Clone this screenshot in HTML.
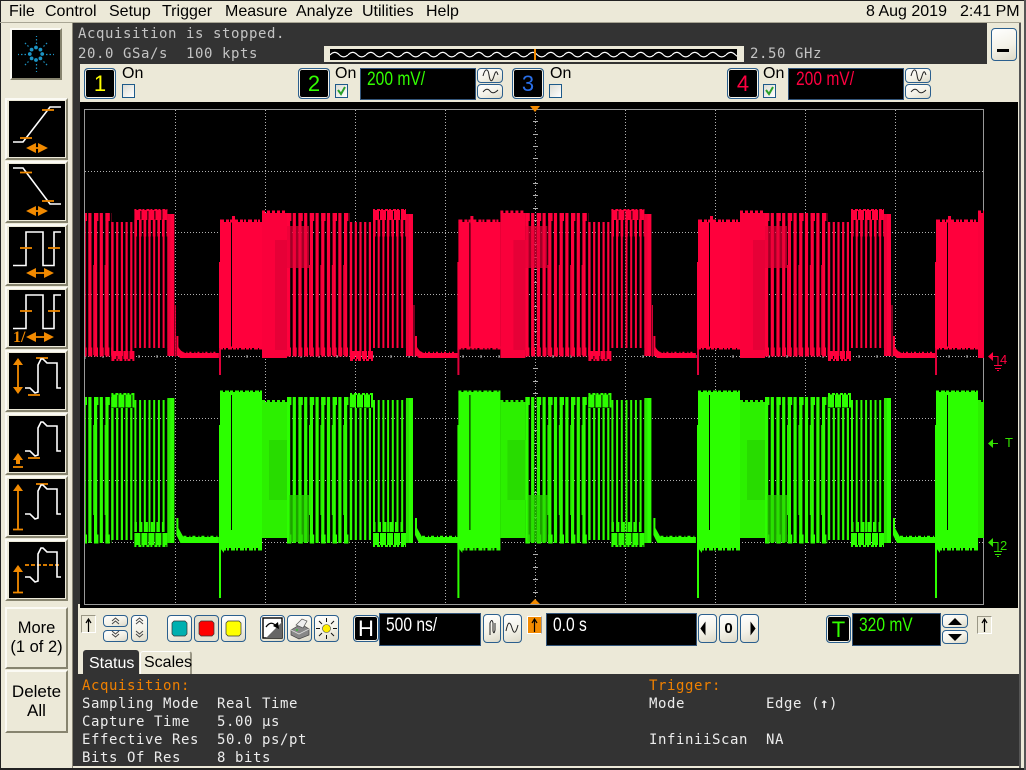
<!DOCTYPE html>
<html><head><meta charset="utf-8"><title>Scope</title>
<style>
html,body{margin:0;padding:0;background:#ece9d8;}
#p{position:relative;width:1026px;height:770px;overflow:hidden;background:#ece9d8;font-family:"Liberation Sans",sans-serif;color:#000;}
#p div{position:absolute;box-sizing:border-box;white-space:pre;}
.d{background:#333;}
.k{background:#000;border:1px solid #33557a;}
.b{background:linear-gradient(160deg,#fff 0%,#f4f2e8 55%,#dcd9c8 100%);border:1.5px solid #2b5f8e;border-radius:4px;}
.r{background:#ece9d8;border:2px solid;border-color:#fbfaf4 #87846f #87846f #fbfaf4;}
.t{font-size:16px;line-height:18px;}
.v{font-size:19px;line-height:18px;transform:scaleX(.82);transform-origin:0 0;}
.m{font-family:"DejaVu Sans Mono","Liberation Mono",monospace;font-size:14px;line-height:18px;letter-spacing:.57px;color:#ececec;}
.n{font-size:22px;line-height:30px;text-align:center;background:#000;border:1.5px solid #2b5f8e;border-radius:4px;box-shadow:0 0 0 1px #f4f2e8 inset;}
.ck{background:linear-gradient(135deg,#dcdcd4,#fff);border:1px solid #1d5a8a;width:13px;height:14px;}
</style></head><body><div id="p">

<div style="left:0;top:0;width:1026px;height:1px;background:#222"></div>
<div style="left:0;top:0;width:1px;height:770px;background:#222"></div>
<div style="left:0;top:768px;width:1026px;height:2px;background:#222"></div>
<div style="left:0;top:22px;width:1021px;height:1px;background:#a8a594"></div>
<div style="left:1024px;top:0;width:2px;height:770px;background:#555"></div>

<div class="t" style="left:9px;top:3px">File</div>
<div class="t" style="left:45px;top:3px">Control</div>
<div class="t" style="left:109px;top:3px">Setup</div>
<div class="t" style="left:162px;top:3px">Trigger</div>
<div class="t" style="left:225px;top:3px">Measure</div>
<div class="t" style="left:296px;top:3px">Analyze</div>
<div class="t" style="left:362px;top:3px">Utilities</div>
<div class="t" style="left:426px;top:3px">Help</div>
<div class="t" style="left:866px;top:3px">8 Aug 2019</div>
<div class="t" style="left:960px;top:3px">2:41 PM</div>

<!-- structure -->
<div style="left:72px;top:23px;width:1px;height:745px;background:#8a8778"></div>
<div class="d" style="left:73px;top:23px;width:914px;height:41px"></div>
<div class="d" style="left:73px;top:64px;width:5px;height:610px"></div>
<div class="d" style="left:78px;top:64px;width:2px;height:540px"></div>
<div style="left:1019px;top:23px;width:2px;height:745px;background:#555"></div>
<div style="left:80px;top:102px;width:938px;height:506px;background:#000"></div>
<div class="d" style="left:73px;top:674px;width:946px;height:92px"></div>

<!-- top text -->
<div class="m" style="left:78px;top:25px;color:#c4c4c4">Acquisition is stopped.</div>
<div class="m" style="left:78px;top:45px;color:#c4c4c4">20.0 GSa/s  100 kpts</div>
<div class="m" style="left:750px;top:45px;color:#c4c4c4">2.50 GHz</div>
<div style="left:324px;top:46px;width:420px;height:16px;background:#ece9d8"></div>
<div class="b" style="left:991px;top:28px;width:26px;height:33px"></div>

<!-- left panel -->
<div class="r" style="left:10px;top:28px;width:52px;height:52px"></div>
<div class="r" style="left:5px;top:98px;width:63px;height:62px"></div>
<div class="r" style="left:5px;top:161px;width:63px;height:62px"></div>
<div class="r" style="left:5px;top:224px;width:63px;height:62px"></div>
<div class="r" style="left:5px;top:287px;width:63px;height:62px"></div>
<div class="r" style="left:5px;top:350px;width:63px;height:62px"></div>
<div class="r" style="left:5px;top:413px;width:63px;height:62px"></div>
<div class="r" style="left:5px;top:476px;width:63px;height:62px"></div>
<div class="r" style="left:5px;top:539px;width:63px;height:62px"></div>
<div class="r" style="left:5px;top:607px;width:63px;height:62px;font-size:16.5px;line-height:19px;text-align:center;padding-top:10px">More
(1 of 2)</div>
<div class="r" style="left:5px;top:670px;width:63px;height:63px;font-size:17px;line-height:19px;text-align:center;padding-top:10px">Delete
All</div>

<!-- channel row -->
<div class="n" style="left:84px;top:68px;width:32px;height:31px;color:#ffff00">1</div>
<div class="t" style="left:122px;top:65px">On</div>
<div class="ck" style="left:122px;top:84px"></div>
<div class="n" style="left:298px;top:68px;width:32px;height:31px;color:#33ff00">2</div>
<div class="t" style="left:335px;top:65px">On</div>
<div class="ck" style="left:335px;top:84px"></div>
<div class="k" style="left:360px;top:68px;width:116px;height:32px"></div>
<div class="t v" style="left:367px;top:71px;color:#33ff00">200 mV/</div>
<div class="b" style="left:477px;top:68px;width:26px;height:15px"></div>
<div class="b" style="left:477px;top:84px;width:26px;height:15px"></div>
<div class="n" style="left:512px;top:68px;width:32px;height:31px;color:#2a6fe8">3</div>
<div class="t" style="left:550px;top:65px">On</div>
<div class="ck" style="left:549px;top:84px"></div>
<div class="n" style="left:727px;top:68px;width:32px;height:31px;color:#ff0040">4</div>
<div class="t" style="left:763px;top:65px">On</div>
<div class="ck" style="left:763px;top:84px"></div>
<div class="k" style="left:788px;top:68px;width:116px;height:32px"></div>
<div class="t v" style="left:796px;top:71px;color:#ff0040">200 mV/</div>
<div class="b" style="left:905px;top:68px;width:26px;height:15px"></div>
<div class="b" style="left:905px;top:84px;width:26px;height:15px"></div>

<!-- bottom controls -->
<div style="left:81px;top:615px;width:15px;height:18px;border:1px solid #9a9786;border-right-color:#fff;border-bottom-color:#fff"></div>
<div class="b" style="left:103px;top:615px;width:25px;height:12px"></div>
<div class="b" style="left:103px;top:630px;width:25px;height:12px"></div>
<div class="b" style="left:131px;top:615px;width:17px;height:27px"></div>
<div class="b" style="left:167px;top:615px;width:25px;height:27px"></div>
<div class="b" style="left:194px;top:615px;width:25px;height:27px;background:#e4e1d2"></div>
<div class="b" style="left:221px;top:615px;width:25px;height:27px"></div>
<div class="b" style="left:260px;top:615px;width:25px;height:27px"></div>
<div class="b" style="left:287px;top:615px;width:25px;height:27px"></div>
<div class="b" style="left:314px;top:615px;width:25px;height:27px"></div>

<div class="n" style="left:353px;top:615px;width:26px;height:27px;color:#fff;line-height:26px">H</div>
<div class="k" style="left:379px;top:613px;width:102px;height:33px"></div>
<div class="t v" style="left:386px;top:617px;color:#fff">500 ns/</div>
<div class="b" style="left:483px;top:614px;width:18px;height:29px"></div>
<div class="b" style="left:503px;top:614px;width:19px;height:29px"></div>
<div style="left:527px;top:616px;width:15px;height:18px;background:#f28a00;border:1px solid #fff;border-right-color:#999"></div>
<div class="k" style="left:546px;top:613px;width:151px;height:33px"></div>
<div class="t v" style="left:553px;top:617px;color:#fff">0.0 s</div>
<div class="b" style="left:698px;top:614px;width:19px;height:29px"></div>
<div class="b" style="left:719px;top:614px;width:19px;height:29px;font-size:15px;font-weight:bold;line-height:27px;text-align:center">0</div>
<div class="b" style="left:740px;top:614px;width:19px;height:29px"></div>
<div class="n" style="left:826px;top:615px;width:25px;height:28px;color:#33ff00;line-height:27px">T</div>
<div class="k" style="left:852px;top:613px;width:89px;height:33px"></div>
<div class="t v" style="left:859px;top:617px;color:#33ff00">320 mV</div>
<div class="b" style="left:942px;top:614px;width:26px;height:14px"></div>
<div class="b" style="left:942px;top:630px;width:26px;height:14px"></div>
<div style="left:977px;top:616px;width:15px;height:18px;border:1px solid #9a9786;border-right-color:#fff;border-bottom-color:#fff"></div>

<!-- tabs -->
<div style="left:83px;top:650px;width:56px;height:24px;background:#333;border-radius:3px 3px 0 0"></div>
<div class="t" style="left:89px;top:655px;color:#fff">Status</div>
<div style="left:140px;top:651px;width:52px;height:23px;border:1px solid #fff;border-right:2px solid #9a9786;border-bottom:none;border-radius:3px 3px 0 0"></div>
<div class="t" style="left:144px;top:654px">Scales</div>

<!-- status text -->
<div class="m" style="left:82px;top:677px;color:#f08000">Acquisition:</div>
<div class="m" style="left:82px;top:695px">Sampling Mode  Real Time</div>
<div class="m" style="left:82px;top:713px">Capture Time   5.00 µs</div>
<div class="m" style="left:82px;top:731px">Effective Res  50.0 ps/pt</div>
<div class="m" style="left:82px;top:749px">Bits Of Res    8 bits</div>
<div class="m" style="left:649px;top:677px;color:#f08000">Trigger:</div>
<div class="m" style="left:649px;top:695px">Mode</div>
<div class="m" style="left:766px;top:695px">Edge (<b>↑</b>)</div>
<div class="m" style="left:649px;top:731px">InfiniiScan</div>
<div class="m" style="left:766px;top:731px">NA</div>

<svg width="1026" height="770" viewBox="0 0 1026 770" style="position:absolute;left:0;top:0">
<defs>
<clipPath id="cp"><rect x="85" y="110" width="899" height="494"/></clipPath>
<pattern id="wv" x="330" y="49" width="18" height="11" patternUnits="userSpaceOnUse">
<path d="M0 6 Q4.5 1 9 5.5 T18 6" fill="none" stroke="#fff" stroke-width="1.2"/>
</pattern>
<marker id="ah" viewBox="0 0 10 10" refX="2" refY="5" markerWidth="5.5" markerHeight="5.5" orient="auto-start-reverse"><path d="M0 0L10 5L0 10z" fill="#f28a00"/></marker>

<g id="rb">
<rect x="1" y="222" width="42" height="126" fill="#ff003c"/>
<rect x="43" y="213" width="25" height="145" fill="#fa003b"/>
<rect x="56" y="240" width="12" height="110" fill="#e60037"/>
<rect x="12" y="222" width="1" height="126" fill="#000"/>
<rect x="13" y="216" width="3" height="8" fill="#ff003c"/>
<path d="M0 262V350H1.600V262z" fill="#ff003c"/>
<rect x="0" y="348" width="2" height="27" fill="#e0003a"/>
<line x1="1" x2="43" y1="348" y2="348" stroke="#ff003c" stroke-width="3" stroke-dasharray="3 1 2 2 4 1"/>
<line x1="1" x2="43" y1="221" y2="221" stroke="#ff003c" stroke-width="3" stroke-dasharray="4 2 3 1 2 2"/>
<line x1="43" x2="68" y1="212" y2="212" stroke="#ff003c" stroke-width="3" stroke-dasharray="3 2"/>
<line x1="68" x2="131" y1="284" y2="284" stroke="#ff003c" stroke-width="142" stroke-dasharray="3.2 2.5"/>
<line x1="68" x2="131" y1="217" y2="217" stroke="#ff003c" stroke-width="8" stroke-dasharray="4.4 7"/>
<line x1="68" x2="131" y1="352" y2="352" stroke="#ff003c" stroke-width="9" stroke-dasharray="4 1.7"/>
<rect x="68" y="226" width="22" height="42" fill="#e80038" opacity=".7"/>
<line x1="90" x2="131" y1="310" y2="310" stroke="#f00038" stroke-width="90" stroke-dasharray="2 9.400"/>
<line x1="131" x2="154" y1="289" y2="289" stroke="#ff003c" stroke-width="134" stroke-dasharray="2.200 2.500"/>
<line x1="131" x2="154" y1="355" y2="355" stroke="#ff003c" stroke-width="8" stroke-dasharray="5 1"/>
<line x1="131" x2="154" y1="360" y2="360" stroke="#ff003c" stroke-width="2" stroke-dasharray="3 2 2 1"/>
<line x1="154" x2="187" y1="215" y2="215" stroke="#ff003c" stroke-width="10" stroke-dasharray="6 1"/>
<line x1="154" x2="187" y1="228" y2="228" stroke="#ff003c" stroke-width="17" stroke-dasharray="2.600 2"/>
<line x1="154" x2="187" y1="210" y2="210" stroke="#ff003c" stroke-width="2" stroke-dasharray="2 2 3 1"/>
<line x1="154" x2="187" y1="284" y2="284" stroke="#ff003c" stroke-width="128" stroke-dasharray="2 2.700"/>
<rect x="187" y="214" width="7" height="142" fill="#ff003c"/>
<rect x="187" y="214" width="3" height="142" fill="#ee003a"/>
<rect x="194.500" y="305" width="1" height="52" fill="#e8003a"/>
<rect x="196" y="336" width="2" height="20" fill="#ff003c"/>
<path d="M197 345Q200 352 205 353H238.500V358H200Q197 356 196 352z" fill="#ff003c"/>
<line x1="201" x2="238" y1="352.500" y2="352.500" stroke="#ff003c" stroke-width="1.500" stroke-dasharray="2 3 1 2"/>
</g>

<g id="gb">
<rect x="1" y="392" width="42" height="156" fill="#2cff00"/>
<rect x="12" y="395" width="1" height="135" fill="#000"/>
<rect x="43" y="402" width="25" height="136" fill="#2cf000"/>
<rect x="50" y="440" width="18" height="60" fill="#28dc00"/>
<path d="M0 425V545H1.600V425z" fill="#2cff00"/>
<rect x="0" y="540" width="2" height="58" fill="#2cff00"/>
<path d="M1 548L5 553V548z" fill="#2cff00"/>
<line x1="1" x2="43" y1="391.500" y2="391.500" stroke="#2cff00" stroke-width="2" stroke-dasharray="3 2 4 1"/>
<line x1="3" x2="43" y1="549" y2="549" stroke="#2cff00" stroke-width="3" stroke-dasharray="4 1 2 2"/>
<line x1="43" x2="68" y1="401" y2="401" stroke="#2cf000" stroke-width="2" stroke-dasharray="3 2"/>
<line x1="68" x2="131" y1="470" y2="470" stroke="#2cff00" stroke-width="146" stroke-dasharray="3.200 2.500"/>
<line x1="68" x2="131" y1="401" y2="401" stroke="#2cff00" stroke-width="8" stroke-dasharray="4.400 7"/>
<line x1="68" x2="131" y1="539" y2="539" stroke="#2cff00" stroke-width="9" stroke-dasharray="4.400 7"/>
<rect x="70" y="495" width="20" height="47" fill="#28d800" opacity=".75"/>
<line x1="90" x2="131" y1="470" y2="470" stroke="#2cf000" stroke-width="90" stroke-dasharray="2 9.400"/>
<line x1="131" x2="154" y1="401" y2="401" stroke="#2cff00" stroke-width="13" stroke-dasharray="6 1"/>
<line x1="131" x2="154" y1="394" y2="394" stroke="#2cff00" stroke-width="2" stroke-dasharray="2 2 3 1"/>
<line x1="131" x2="154" y1="474" y2="474" stroke="#2cff00" stroke-width="132" stroke-dasharray="2.200 2.500"/>
<line x1="154" x2="187" y1="466" y2="466" stroke="#2cff00" stroke-width="132" stroke-dasharray="2 2.700"/>
<line x1="154" x2="187" y1="539" y2="539" stroke="#2cff00" stroke-width="12" stroke-dasharray="6 1"/>
<line x1="154" x2="187" y1="527" y2="527" stroke="#2cff00" stroke-width="10" stroke-dasharray="2.500 3"/>
<line x1="154" x2="187" y1="546" y2="546" stroke="#2cff00" stroke-width="2" stroke-dasharray="2 2 3 1"/>
<rect x="187" y="398" width="7" height="145" fill="#2cff00"/>
<rect x="187" y="398" width="3" height="145" fill="#2ae800"/>
<path d="M196 518H198V528L203 537H238.500V543H200L196 535z" fill="#2cff00"/>
<line x1="203" x2="238" y1="536.500" y2="536.500" stroke="#2cff00" stroke-width="1.500" stroke-dasharray="3 3 1 2"/>
</g>

<path id="pw" d="M25 388H30L35 393L38 392V365L41 359L43 359L47 363H57V388H61" fill="none" stroke="#fff" stroke-width="1.6"/>
</defs>

<!-- logo -->
<rect x="12" y="30" width="48" height="48" fill="#000"/>
<g fill="#1c94c4">
<circle cx="36" cy="47.500" r="1.900"/><circle cx="36" cy="60" r="1.900"/><circle cx="29.800" cy="54" r="1.900"/><circle cx="42.200" cy="54" r="1.900"/>
<circle cx="31.600" cy="49.600" r="1.900"/><circle cx="40.400" cy="49.600" r="1.900"/><circle cx="31.600" cy="58.400" r="1.900"/><circle cx="40.400" cy="58.400" r="1.900"/>
</g>
<g stroke="#1c94c4" stroke-width="1.200" stroke-dasharray="1.500 2" fill="none">
<path d="M36.500 44V36M36.500 64V72M26 54.500H18M46 54.500H54M28.500 46.500L24 42M43.500 46.500L48 42M28.500 61.500L24 66M43.500 61.500L48 66"/>
</g>

<!-- top bar -->
<rect x="330" y="49" width="407" height="11" fill="#000"/>
<rect x="330" y="49" width="407" height="11" fill="url(#wv)"/>
<rect x="534" y="49" width="2" height="11" fill="#f28a00"/>
<rect x="997" y="49" width="12" height="3" fill="#000"/>
<!-- checks -->
<path d="M338 90L341 94L345 87" fill="none" stroke="#2aa02a" stroke-width="2"/>
<path d="M766 90L769 94L773 87" fill="none" stroke="#2aa02a" stroke-width="2"/>
<!-- channel wave icons -->
<g fill="none" stroke="#222" stroke-width="1">
<path d="M483 76C485 68 488 68 489 75S492 83 494 76S497 72 498 75"/>
<path d="M483 92Q487 87 490 91T498 90"/>
<path d="M911 76C913 68 916 68 917 75S920 83 922 76S925 72 926 75"/>
<path d="M911 92Q915 87 918 91T926 90"/>
</g>

<!-- graticule -->
<g stroke="#b0b0b0" stroke-width="1" stroke-dasharray="1 2" fill="none">
<path d="M85 171.500H984M85 232.500H984M85 294.500H984M85 418.500H984M85 480.500H984M85 542.500H984M85 356.500H984"/>
<path d="M175.500 110V604M265.500 110V604M355.500 110V604M445.500 110V604M535.500 110V604M625.500 110V604M715.500 110V604M805.500 110V604M895.500 110V604"/>
</g>
<path d="M85 354V359M103 355V358M121 355V358M139 355V358M157 355V358M193 355V358M211 355V358M229 355V358M247 355V358M283 355V358M301 355V358M319 355V358M337 355V358M373 355V358M391 355V358M409 355V358M427 355V358M463 355V358M481 355V358M499 355V358M517 355V358M553 355V358M571 355V358M589 355V358M607 355V358M643 355V358M661 355V358M679 355V358M697 355V358M733 355V358M751 355V358M769 355V358M787 355V358M823 355V358M841 355V358M859 355V358M877 355V358M913 355V358M931 355V358M949 355V358M967 355V358" stroke="#b0b0b0" stroke-width="1"/>
<path d="M533 121.500H538M533 134.500H538M533 146.500H538M533 158.500H538M533 183.500H538M533 195.500H538M533 208.500H538M533 220.500H538M533 244.500H538M533 257.500H538M533 269.500H538M533 282.500H538M533 306.500H538M533 319.500H538M533 331.500H538M533 344.500H538M533 368.500H538M533 381.500H538M533 393.500H538M533 406.500H538M533 430.500H538M533 443.500H538M533 455.500H538M533 468.500H538M533 492.500H538M533 505.500H538M533 517.500H538M533 530.500H538M533 554.500H538M533 567.500H538M533 579.500H538M533 592.500H538" stroke="#b0b0b0" stroke-width="1"/>
<rect x="84.500" y="109.500" width="899" height="495" fill="none" stroke="#999" stroke-width="1"/>

<!-- waveforms -->
<g clip-path="url(#cp)">
<use href="#rb" x="-19.600"/><use href="#rb" x="219"/><use href="#rb" x="457.400"/><use href="#rb" x="697"/><use href="#rb" x="935"/>
<use href="#gb" x="-19.600"/><use href="#gb" x="219"/><use href="#gb" x="457.400"/><use href="#gb" x="697"/><use href="#gb" x="935"/>
</g>

<path d="M530 106H540L535 112z" fill="#f28a00"/>
<path d="M530 604H540L535 599z" fill="#f28a00"/>

<!-- right markers -->
<g fill="none" stroke="#ff0040" stroke-width="1"><path d="M993 356.500H998V365M994 365.500H1002M995 368.500H1001M997 370.500H999"/></g>
<path d="M988 356.500L993 352V361z" fill="#ff0040"/>
<g fill="none" stroke="#33e000" stroke-width="1"><path d="M993 443.500H998"/><path d="M993 542.500H998V551M994 551.500H1002M995 554.500H1001M997 556.500H999"/></g>
<path d="M988 443.500L993 439V448z" fill="#33e000"/>
<path d="M988 542.500L993 538V547z" fill="#33e000"/>
<text x="1000" y="364" font-family="Liberation Sans,sans-serif" font-size="13" fill="#ff0040">4</text>
<text x="1005" y="447" font-family="Liberation Sans,sans-serif" font-size="13" fill="#33e000">T</text>
<text x="1000" y="550" font-family="Liberation Sans,sans-serif" font-size="13" fill="#33e000">2</text>

<!-- left panel icons -->
<g fill="#000"><rect x="9" y="101" width="56" height="56"/><rect x="9" y="164" width="56" height="56"/><rect x="9" y="227" width="56" height="56"/><rect x="9" y="290" width="56" height="56"/><rect x="9" y="353" width="56" height="56"/><rect x="9" y="416" width="56" height="56"/><rect x="9" y="479" width="56" height="56"/><rect x="9" y="542" width="56" height="56"/></g>
<g fill="none" stroke="#fff" stroke-width="1.6">
<path d="M13 142H23L50 107H61"/>
<path d="M13 168H23L50 204H61"/>
<path d="M13 265.500H26V232H43V265.500H54V232H61"/>
<path d="M13 328.500H26V295H43V328.500H54V295H61"/>
</g>
<g fill="none" stroke="#f28a00" stroke-width="1.800">
<path d="M20 138H32M42 110H54M20 172.500H32M42 201H54M20 248H32M48 248H60M20 311H32M48 311H60"/>
<path d="M34 148H40" marker-start="url(#ah)" marker-end="url(#ah)"/>
<path d="M34 211H40" marker-start="url(#ah)" marker-end="url(#ah)"/>
<path d="M34 273H46" marker-start="url(#ah)" marker-end="url(#ah)"/>
<path d="M34 337H46" marker-start="url(#ah)" marker-end="url(#ah)"/>
<path d="M36 358H48M28 395H40M18 363V388" />
<path d="M28 458H40M13 467H23"/>
<path d="M36 484H48M18 489V529M13 529.500H23"/>
<path d="M25 565H59" stroke-dasharray="4 2"/><path d="M18 570V592M13 592.500H23"/>
</g>
<g fill="#f28a00">
<path d="M13 365L18 358L23 365zM13 387L18 394L23 387z"/>
<path d="M13 460L18 453L23 460H20V464H16V460z"/>
<path d="M13 491L18 484L23 491z"/>
<path d="M13 572L18 565L23 572z"/>
</g>
<use href="#pw"/><use href="#pw" y="63"/><use href="#pw" y="126"/><use href="#pw" y="189"/>
<text x="13" y="342" font-family="Liberation Serif,serif" font-size="16" font-weight="bold" fill="#f28a00">1/</text>

<!-- bottom icons -->
<g fill="none" stroke="#000" stroke-width="1.2">
<path d="M88.500 632V620M86 623L88.500 619L91 623"/>
<path d="M984.500 632V620M982 623L984.500 619L987 623"/>
<path d="M534.500 632V620M532 623L534.500 619L537 623"/>
</g>
<g fill="none" stroke="#444" stroke-width="1">
<path d="M112 621L115.500 618L119 621M112 624L115.500 621L119 624"/>
<path d="M112 634L115.500 637L119 634M112 631L115.500 634L119 631"/>
<path d="M136 621L139.500 618L143 621M136 624L139.500 621L143 624"/>
<path d="M136 634L139.500 637L143 634M136 631L139.500 634L143 631"/>
</g>
<g stroke="#333" stroke-width=".7">
<path d="M174 621H185L187 623V634L185 636H174L172 634V623z" fill="#00b0b0"/>
<path d="M201 621H212L214 623V634L212 636H201L199 634V623z" fill="#ff0000"/>
<path d="M228 621H239L241 623V634L239 636H228L226 634V623z" fill="#ffff00"/>
</g>
<!-- autoscale -->
<rect x="263" y="618" width="19" height="20" fill="#fff" stroke="#000" stroke-width="1.400"/>
<path d="M282 622V638H266z" fill="#666"/>
<path d="M266 627Q271 620 276 626" fill="none" stroke="#000" stroke-width="1.300"/><path d="M273 626L279 629L278 622z" fill="#000"/>
<!-- printer -->
<path d="M291 630L301 624L309 629V635L299 639L291 635z" fill="#888" stroke="#444" stroke-width=".7"/>
<path d="M296 625L302 619L307 621L303 628z" fill="#eee" stroke="#555" stroke-width=".7"/>
<path d="M291 630L299 634L309 629" fill="none" stroke="#ddd" stroke-width=".8"/>
<circle cx="297" cy="630" r=".9" fill="#2c2"/>
<!-- sun -->
<circle cx="326.500" cy="628.500" r="4" fill="#ffee00" stroke="#444" stroke-width=".6"/>
<path d="M326.500 618V622M326.500 635V639M316 628.500H320M333 628.500H337M319 621L322 624M331 633L334 636M334 621L331 624M322 633L319 636" stroke="#111" stroke-width="1"/>
<!-- H row wave icons -->
<g fill="none" stroke="#222" stroke-width="1">
<path d="M490 635V623Q492 618 493 623V631Q494 635 495 630V623"/>
<path d="M506 631C508 621 510 621 512 628S516 633 518 625"/>
</g>
<path d="M705 623L701 628.500L705 634z" fill="#000" stroke="#000"/>
<path d="M751 623L755 628.500L751 634z" fill="#000" stroke="#000"/>
<path d="M948 625L955 618L962 625z" fill="#000"/>
<path d="M948 634L955 641L962 634z" fill="#000"/>
</svg>
</div></body></html>
